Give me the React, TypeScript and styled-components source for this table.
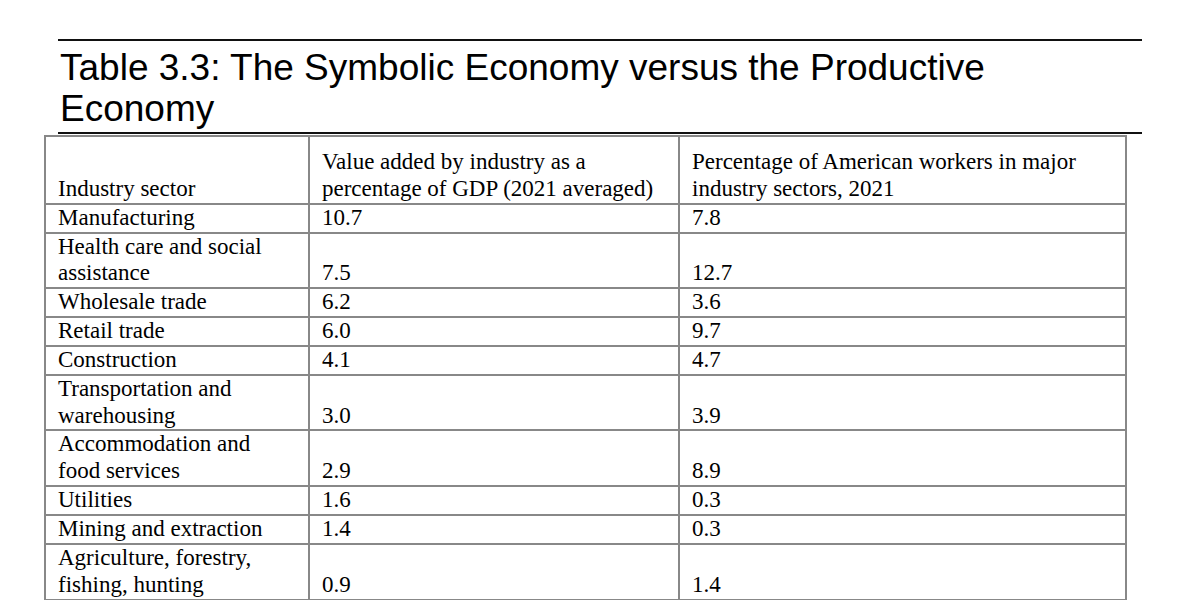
import React from "react";
import styled, { createGlobalStyle } from "styled-components";

const Global = createGlobalStyle`
  html, body { margin: 0; padding: 0; background: #ffffff; }
  body { width: 1200px; height: 600px; overflow: hidden; }
`;

const Page = styled.div`
  padding-top: 39px;
  display: flex;
  flex-direction: column;
  align-items: flex-start;
`;

const TitleBlock = styled.div`
  margin-left: 58px;
  width: 1084px;
  border-top: 2px solid #111;
  border-bottom: 2px solid #111;
  padding: 6px 0 3px 2px;
  box-sizing: border-box;
`;

const Title = styled.h1`
  margin: 0;
  max-width: 1000px;
  font-family: "Liberation Sans", Arial, sans-serif;
  font-weight: 400;
  font-size: 37px;
  line-height: 41px;
  color: #000;
`;

const Table = styled.table`
  margin-left: 44px;
  margin-top: 1px;
  width: 1081px;
  border-collapse: collapse;
  table-layout: fixed;
  font-family: "Liberation Serif", "Times New Roman", serif;
  font-size: 23px;
  line-height: 26.85px;
  color: #000;
`;

const Cell = styled.td<{ $head?: boolean }>`
  border: 2px solid #888888;
  padding: ${(p) => (p.$head ? "12px 12px 0 12px" : "0 12px")};
  vertical-align: bottom;
  text-align: left;
  font-weight: 400;
`;

type Row = [string, string, string];

const rows: Row[] = [
  ["Manufacturing", "10.7", "7.8"],
  ["Health care and social assistance", "7.5", "12.7"],
  ["Wholesale trade", "6.2", "3.6"],
  ["Retail trade", "6.0", "9.7"],
  ["Construction", "4.1", "4.7"],
  ["Transportation and warehousing", "3.0", "3.9"],
  ["Accommodation and food services", "2.9", "8.9"],
  ["Utilities", "1.6", "0.3"],
  ["Mining and extraction", "1.4", "0.3"],
  ["Agriculture, forestry, fishing, hunting", "0.9", "1.4"],
];

export default function App() {
  return (
    <>
      <Global />
      <Page>
        <TitleBlock>
          <Title>Table 3.3: The Symbolic Economy versus the Productive Economy</Title>
        </TitleBlock>
        <Table>
          <colgroup>
            <col style={{ width: 264 }} />
            <col style={{ width: 370 }} />
            <col style={{ width: 447 }} />
          </colgroup>
          <thead>
            <tr>
              <Cell as="th" $head>Industry sector</Cell>
              <Cell as="th" $head>Value added by industry as a percentage of GDP (2021 averaged)</Cell>
              <Cell as="th" $head>Percentage of American workers in major industry sectors, 2021</Cell>
            </tr>
          </thead>
          <tbody>
            {rows.map((r) => (
              <tr key={r[0]}>
                <Cell>{r[0]}</Cell>
                <Cell>{r[1]}</Cell>
                <Cell>{r[2]}</Cell>
              </tr>
            ))}
          </tbody>
        </Table>
      </Page>
    </>
  );
}
